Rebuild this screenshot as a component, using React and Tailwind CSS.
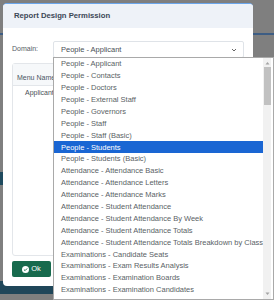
import React from "react";

const items = [
  "People - Applicant",
  "People - Contacts",
  "People - Doctors",
  "People - External Staff",
  "People - Governors",
  "People - Staff",
  "People - Staff (Basic)",
  "People - Students",
  "People - Students (Basic)",
  "Attendance - Attendance Basic",
  "Attendance - Attendance Letters",
  "Attendance - Attendance Marks",
  "Attendance - Student Attendance",
  "Attendance - Student Attendance By Week",
  "Attendance - Student Attendance Totals",
  "Attendance - Student Attendance Totals Breakdown by Class",
  "Examinations - Candidate Seats",
  "Examinations - Exam Results Analysis",
  "Examinations - Examination Boards",
  "Examinations - Examination Candidates",
];

export default function App() {
  return (
    <div
      className="relative w-[274px] h-[300px] overflow-hidden bg-[#7f7f7f]"
      style={{ fontFamily: '"Liberation Sans", Arial, sans-serif' }}
    >
      {/* underlying page (dimmed) */}
      <div className="flex flex-col h-full">
        <div className="h-[33px]" />
        <div className="h-[2px] bg-[#3d5d84]" />
        <div className="h-[137px]" />
        <div className="h-[13px] bg-[#1f4a5e]" />
        <div className="flex-1" />
        <div className="h-[13px] bg-[#1f4659] mb-[6px]" />
      </div>

      {/* modal */}
      <div className="absolute left-[3px] top-[3px] w-[250px] h-[283px] bg-white rounded-[4px] border-t border-[#6aa6ec] flex flex-col overflow-hidden">
        <div className="h-[24px] bg-[#eef2f8] flex items-center px-[11px]">
          <span className="text-[7.7px] font-semibold text-[#3b4756]">Report Design Permission</span>
        </div>
        <div className="flex-1 flex flex-col px-[9px] pt-[13px]">
          <div className="flex items-center h-[17px]">
            <span className="w-[41px] text-[7px] text-[#555c66]">Domain:</span>
            <div className="flex-1 h-[17px] border border-[#dfe3e8] rounded-[2px] flex items-center pl-[7px] pr-[5px]">
              <span className="flex-1 text-[7.5px] text-[#4a4f57]">People - Applicant</span>
              <svg width="6" height="4" viewBox="0 0 6 4" className="mr-[1px]">
                <path d="M1 1 L3 3 L5 1" stroke="#666" strokeWidth="1" fill="none" />
              </svg>
            </div>
          </div>
          <div className="mt-[5px] h-[193px] border border-[#e3e6ea] rounded-[3px] flex flex-col">
            <div className="h-[22px] bg-[#f6f8fa] border-b border-[#e3e6ea] flex items-start pl-[4px] pt-[10px]">
              <span className="text-[7px] leading-[8px] text-[#4a5563]">Menu Name</span>
            </div>
            <div className="pl-[12px] pt-[2px] text-[7px] text-[#4a4f57]">Applicant</div>
          </div>
          <div className="mt-[5px] flex gap-[2px]">
            <div className="w-[39px] h-[16px] bg-[#176a4d] rounded-[2px] flex items-center justify-center gap-[2px]">
              <svg width="7" height="7" viewBox="0 0 8 8">
                <circle cx="4" cy="4" r="4" fill="white" />
                <path d="M2.2 4.1 L3.5 5.3 L5.9 2.8" stroke="#176a4d" strokeWidth="1.1" fill="none" />
              </svg>
              <span className="text-[7.5px] text-white">Ok</span>
            </div>
            <div className="w-[39px] h-[16px] bg-[#176a4d] rounded-[2px]" />
          </div>
        </div>
      </div>

      {/* native select popup */}
      <div className="absolute left-[53px] top-[57px] w-[221px] h-[243px] bg-white border border-[#a9a9a9] flex">
        <div className="flex-1 flex flex-col">
          {items.map((t, i) => (
            <div
              key={i}
              className={
                "h-[11.9px] shrink-0 flex items-center pl-[7px] whitespace-nowrap text-[7.5px] " +
                (i === 7 ? "bg-[#1a66d3] text-white" : "text-[#5a5f66]")
              }
            >
              {t}
            </div>
          ))}
        </div>
        <div className="w-[9px] bg-[#f1f1f1] flex flex-col items-center mr-[2px]">
          <svg width="5" height="4" viewBox="0 0 5 4" className="mt-[3px]">
            <path d="M0.5 3.5 L2.5 1 L4.5 3.5 Z" fill="#a3a3a3" />
          </svg>
          <div className="mt-[2px] w-[7px] h-[38px] bg-[#c1c1c1]" />
          <div className="flex-1" />
          <svg width="5" height="4" viewBox="0 0 5 4" className="mb-[3px]">
            <path d="M0.5 0.5 L2.5 3 L4.5 0.5 Z" fill="#a3a3a3" />
          </svg>
        </div>
      </div>
    </div>
  );
}
